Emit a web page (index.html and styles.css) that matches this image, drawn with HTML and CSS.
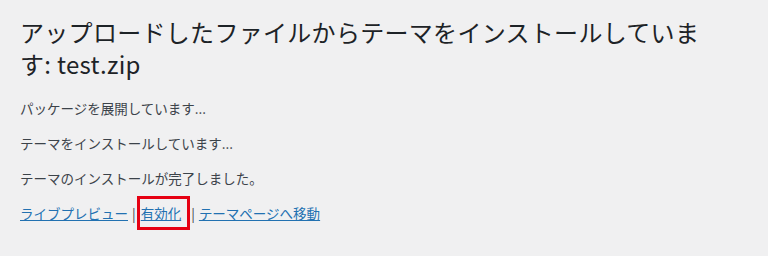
FILE: index.html
```html
<!DOCTYPE html>
<html lang="ja">
<head>
    <meta charset="UTF-8">
    <meta name="viewport" content="width=device-width, initial-scale=1.0">
    <title>テーマのインストール</title>
    <link rel="stylesheet" href="styles.css">
</head>
<body>
    <div class="wrap">
        <h1>アップロードしたファイルからテーマをインストールしています: test.zip</h1>
        <p>パッケージを展開しています...</p>
        <p>テーマをインストールしています...</p>
        <p>テーマのインストールが完了しました。</p>
        <p class="actions">
            <a href="#">ライブプレビュー</a> <span class="sep">|</span><span class="highlight"><a href="#">有効化</a></span><span class="sep">|</span> <a href="#">テーマページへ移動</a>
        </p>
    </div>
</body>
</html>
```

FILE: styles.css
```css
body {
    margin: 0;
    padding: 0;
    background-color: #f0f0f1;
    font-family: "Noto Sans CJK JP", "Liberation Sans", sans-serif;
    color: #3c434a;
}
.wrap {
    padding: 16px 20px 0 20px;
}
h1 {
    max-width: 708px;
    margin: 0 0 18px 0;
    font-size: 24px;
    line-height: 32px;
    font-weight: 400;
    letter-spacing: 0.3px;
    color: #1d2327;
}
p {
    margin: 0 0 15px 0;
    font-size: 13.5px;
    line-height: 20px;
}
a {
    color: #2271b1;
    text-decoration: underline;
}
.sep {
    padding: 0 1px;
}
.highlight {
    display: inline-block;
    margin: -9px 0 -5px 0;
    border: 3px solid #e60012;
    padding: 4px 6px 4px 1px;
    line-height: 20px;
}
```
